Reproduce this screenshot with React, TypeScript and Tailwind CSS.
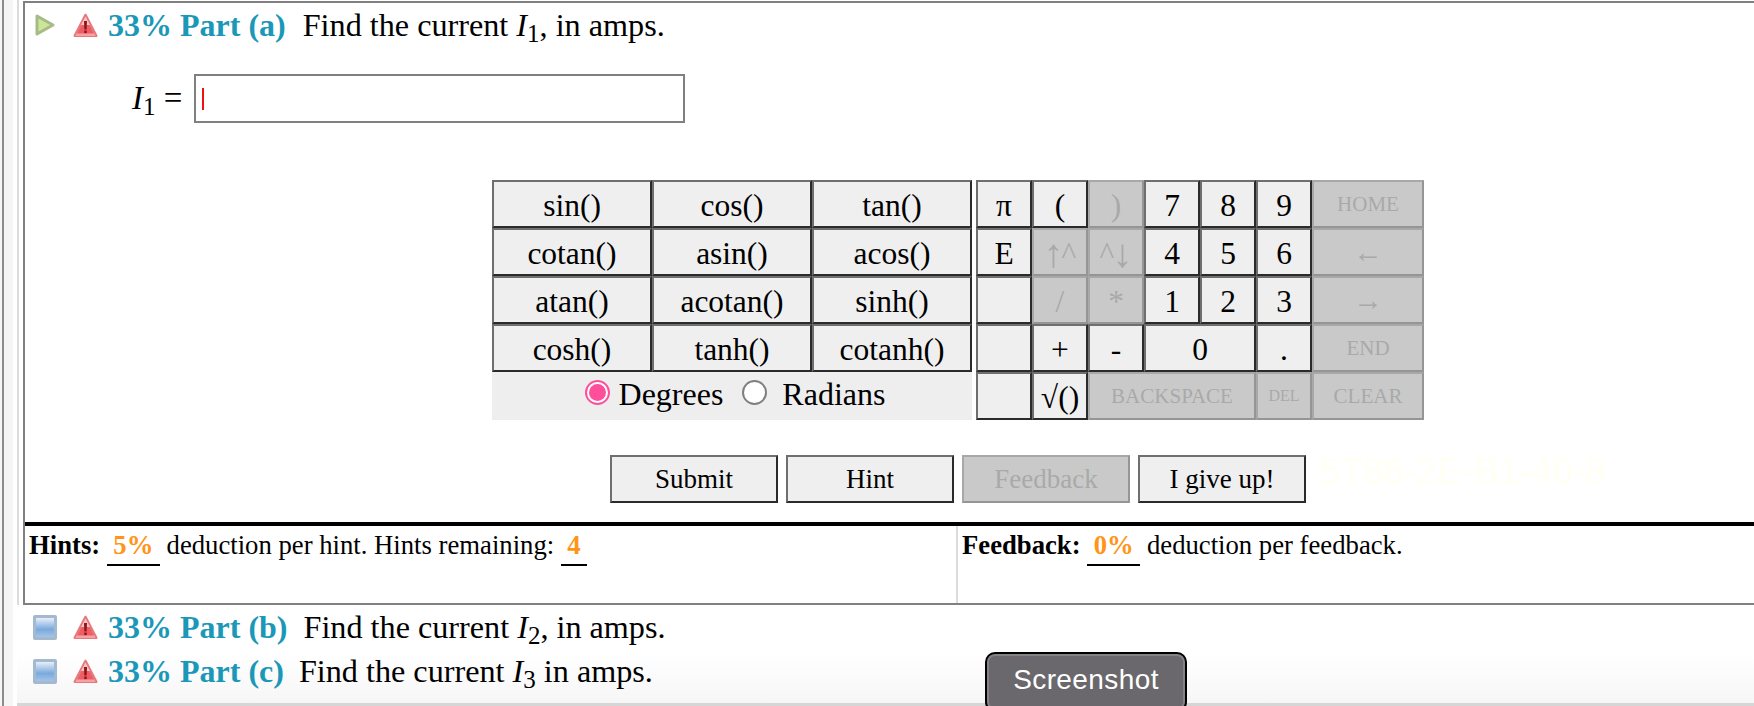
import React from 'react';

const keyBase =
  'flex items-center justify-center whitespace-nowrap border-2 border-solid p-0 leading-none';
const keyOn =
  'bg-[#efefef] text-black border-t-[#6f6f6f] border-l-[#6f6f6f] border-b-[#2a2a2a] border-r-[#2a2a2a]';
const keyOff =
  'bg-[#c9c9c9] text-[#a9a9a9] border-t-[#a8a8a8] border-l-[#a8a8a8] border-b-[#959595] border-r-[#959595]';

interface KeyProps {
  label?: React.ReactNode;
  off?: boolean;
  className?: string;
}

const Key: React.FC<KeyProps> = ({ label, off, className = 'pt-[3px] text-[31.5px]' }) => (
  <button type="button" className={`${keyBase} ${off ? keyOff : keyOn} ${className}`}>
    {label}
  </button>
);

const funcs = [
  'sin()', 'cos()', 'tan()',
  'cotan()', 'asin()', 'acos()',
  'atan()', 'acotan()', 'sinh()',
  'cosh()', 'tanh()', 'cotanh()',
];

const Warning = () => (
  <svg viewBox="0 0 25 25" className="h-[25px] w-[25px] shrink-0 blur-[0.4px]">
    <path d="M12.5 2 L23.2 22.8 H1.8 Z" fill="#ee5d63" stroke="#e5797d" strokeWidth="2.6" strokeLinejoin="round" />
    <path d="M12.5 3.5 L17 12 H8 Z" fill="#f8c4c4" />
    <path d="M3.5 20.5 H21.5 L22.5 23 H2.5 Z" fill="#f4a3a5" />
    <path d="M11 8 H14 L13.6 16.5 H11.4 Z" fill="#8d1418" />
    <rect x="11.3" y="17.5" width="2.4" height="2.6" fill="#8d1418" />
  </svg>
);

const PlayIcon = () => (
  <svg viewBox="0 0 20 22" className="h-[22px] w-[20px] shrink-0 blur-[0.4px]">
    <path d="M2 2 L18 11 L2 20 Z" fill="#cde596" stroke="#a6bc88" strokeWidth="3" strokeLinejoin="round" />
  </svg>
);

const BoxIcon = () => (
  <div className="h-[25px] w-[24px] shrink-0 rounded-[2px] border-[3px] border-solid border-[#a2b9cf] bg-gradient-to-b from-[#e8eff7] via-[#7aa9dd] via-60% to-[#a6c4e6] blur-[0.4px]" />
);

const Sub: React.FC<{ n: string }> = ({ n }) => <sub className="text-[25px] not-italic">{n}</sub>;

const Part: React.FC<{ title: string; sub: string; tail: string; textClass: string }> = ({ title, sub, tail, textClass }) => (
  <div className="flex h-[44px] items-center">
    <div className="ml-[10px] flex w-[75px] items-center">
      <div className="w-[40px]"><BoxIcon /></div>
      <Warning />
    </div>
    <div className="whitespace-nowrap text-[32.2px] leading-[40px]">
      <span className="text-[32px] font-bold text-[#1b98b8]">{title}</span>
      <span className={textClass}>
        Find the current <i>I</i><Sub n={sub} />{tail}
      </span>
    </div>
  </div>
);

export default function App() {
  return (
    <div className="relative flex h-[706px] w-[1754px] overflow-hidden bg-white text-black [font-family:'Liberation_Serif','Times_New_Roman',serif]">
      {/* left edge stripes */}
      <div className="w-[2px] shrink-0 bg-[#f6f6f6]" />
      <div className="w-[2px] shrink-0 bg-[#8c8c8c]" />
      <div className="w-[9px] shrink-0 bg-[#f5f5f5]" />
      <div className="w-[4px] shrink-0 bg-white" />
      <div className="w-[2px] shrink-0 bg-[#dcdcdc]" />

      <div className="flex min-w-0 flex-1 flex-col pl-[4px] pt-[1px]">
        {/* Part (a) panel, wider than the window so its centre sits at x=958 */}
        <div className="h-[604px] w-[1870px] shrink-0 border-2 border-solid border-[#808080]">
          <div className="mt-[2px] flex h-[40px] items-center">
            <div className="ml-[10px] flex w-[73px] items-center">
              <div className="w-[38px]"><PlayIcon /></div>
              <Warning />
            </div>
            <div className="whitespace-nowrap text-[32.2px] leading-[40px]">
              <span className="text-[32px] font-bold text-[#1b98b8]">33% Part (a)</span>
              <span className="ml-[17px]">
                Find the current <i>I</i><Sub n="1" />, in amps.
              </span>
            </div>
          </div>

          <div className="ml-[107px] mt-[29px] flex h-[49px] items-center">
            <div className="w-[62px] whitespace-nowrap text-[33px]">
              <i>I</i><Sub n="1" /> =
            </div>
            <div className="flex h-[49px] w-[491px] items-center border-2 border-solid border-[#808080] pl-[6px]">
              <div className="h-[22px] w-[2px] bg-[#f01010]" />
            </div>
          </div>

          {/* keypad */}
          <div className="mt-[57px] flex justify-center gap-[4px]">
            <div className="grid w-[480px] grid-cols-3 grid-rows-[repeat(5,48px)]">
              {funcs.map((f) => (
                <Key key={f} label={f} />
              ))}
              <div className="col-span-3 flex items-center justify-center bg-[#eeeeee] pb-[4px] pl-[6px] text-[32px]">
                <span className="-mt-[3px] flex h-[25px] w-[25px] items-center justify-center rounded-full border-2 border-solid border-[#ff4f9b] bg-white">
                  <span className="h-[17px] w-[17px] rounded-full bg-[#ff4f9b]" />
                </span>
                <span className="ml-[9px]">Degrees</span>
                <span className="-mt-[3px] ml-[19px] h-[25px] w-[25px] rounded-full border-2 border-solid border-[#808080] bg-white" />
                <span className="ml-[15px]">Radians</span>
              </div>
            </div>
            <div className="grid w-[448px] grid-cols-8 grid-rows-[repeat(5,48px)]">
              <Key label="π" />
              <Key label="(" />
              <Key label=")" off />
              <Key label="7" />
              <Key label="8" />
              <Key label="9" />
              <Key label="HOME" off className="col-span-2 text-[21px]" />

              <Key label="E" />
              <Key label={<><span className="text-[40px]">↑</span><span className="-ml-[2px]">^</span></>} off />
              <Key label={<><span>^</span><span className="-ml-[2px] text-[40px]">↓</span></>} off />
              <Key label="4" />
              <Key label="5" />
              <Key label="6" />
              <Key label="←" off className="col-span-2 text-[30px]" />

              <Key />
              <Key label="/" off />
              <Key label="*" off />
              <Key label="1" />
              <Key label="2" />
              <Key label="3" />
              <Key label="→" off className="col-span-2 text-[30px]" />

              <Key />
              <Key label="+" />
              <Key label="-" />
              <Key label="0" className="col-span-2 pt-[3px] text-[31.5px]" />
              <Key label="." />
              <Key label="END" off className="col-span-2 text-[21px]" />

              <Key />
              <Key label="√()" />
              <Key label="BACKSPACE" off className="col-span-3 text-[21px]" />
              <Key label="DEL" off className="text-[16px]" />
              <Key label="CLEAR" off className="col-span-2 text-[21px]" />
            </div>
          </div>

          <div className="mt-[35px] flex justify-center gap-[8px]">
            <Key label="Submit" className="h-[48px] w-[168px] text-[27px]" />
            <Key label="Hint" className="h-[48px] w-[168px] text-[27px]" />
            <Key label="Feedback" off className="h-[48px] w-[168px] text-[27px]" />
            <Key label="I give up!" className="h-[48px] w-[168px] text-[27px]" />
          </div>

          {/* hints and feedback */}
          <div className="mt-[19px] grid h-[81px] grid-cols-[931px_1fr] border-t-4 border-solid border-black text-[26.7px] leading-[32px]">
            <div className="whitespace-nowrap pl-[4px] pt-[3px]">
              <b>Hints:</b>{' '}
              <b className="inline-block w-[53px] border-b-2 border-solid border-black pb-[3px] text-center text-[#ff9419]">5%</b>{' '}
              deduction per hint. Hints remaining:{' '}
              <b className="inline-block w-[26px] border-b-2 border-solid border-black pb-[3px] text-center text-[#ff9419]">4</b>
            </div>
            <div className="whitespace-nowrap border-l-2 border-solid border-[#dcdcdc] pl-[4px] pt-[3px]">
              <b>Feedback:</b>{' '}
              <b className="inline-block w-[53px] border-b-2 border-solid border-black pb-[3px] text-center text-[#ff9419]">0%</b>{' '}
              deduction per feedback.
            </div>
          </div>
        </div>

        <div className="-ml-[6px] flex-1 border-b-[3px] border-solid border-[#d6d6d6] bg-gradient-to-b from-white from-50% to-[#f6f6f6] pl-[6px]">
          <Part title="33% Part (b)" sub="2" tail=", in amps." textClass="ml-[16px]" />
          <Part title="33% Part (c)" sub="3" tail=" in amps." textClass="ml-[15px]" />
        </div>
      </div>

      {/* faint watermark beside the buttons */}
      <div className="absolute left-[1320px] top-[450px] whitespace-nowrap text-[37px] leading-[44px] text-[#fffff4] [font-family:'Liberation_Sans',Arial,sans-serif]">
        5T88-2E-B1-40-8
      </div>

      {/* system tooltip over the page */}
      <div className="absolute left-[985px] top-[652px] flex h-[60px] w-[202px] justify-center rounded-[10px] border-2 border-solid border-black bg-[#6a686c] pt-[9px] text-[28px] leading-[34px] tracking-[0.4px] text-white shadow-[inset_0_0_0_2px_#858387] [font-family:'Liberation_Sans',Arial,sans-serif]">
        Screenshot
      </div>
    </div>
  );
}
